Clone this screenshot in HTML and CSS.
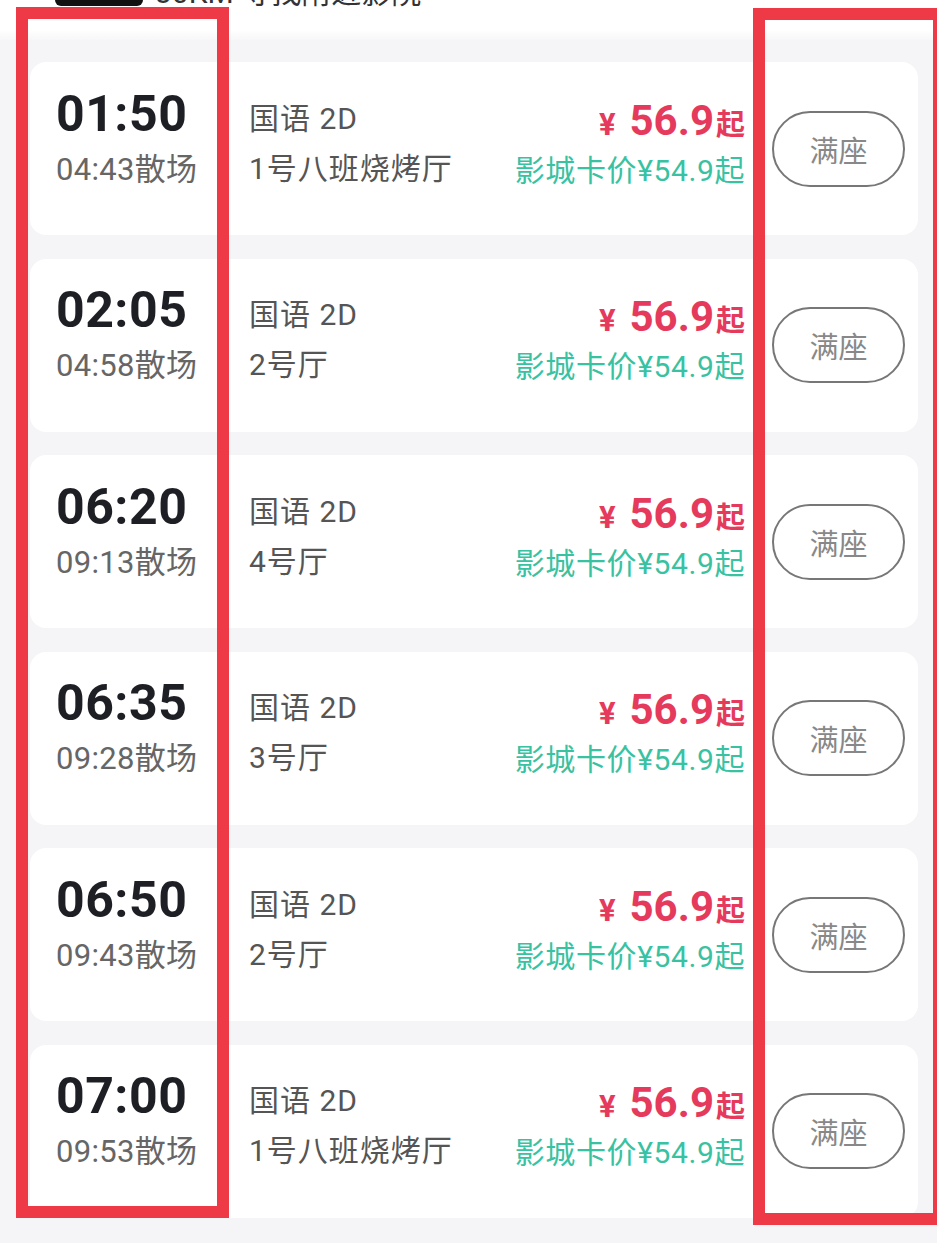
FILE: index.html
```html
<!DOCTYPE html>
<html lang="zh-CN">
<head>
  <meta charset="UTF-8" />
  <meta name="viewport" content="width=device-width, initial-scale=1.0" />
  <title>场次列表</title>
  <link rel="stylesheet" href="styles.css">
</head>
<body>

  <div class="topbar">
    <span class="tag"></span>
    <span class="top-text">30KM 寻找附近影院</span>
  </div>

  <div class="list">
    <div class="card">
      <div class="time">
        <div class="start">01:50</div>
        <div class="end">04:43散场</div>
      </div>
      <div class="info">
        <div class="lang">国语 2D</div>
        <div class="hall">1号八班烧烤厅</div>
      </div>
      <div class="price">
        <div class="now"><span class="yen">¥</span><span class="num">56.9</span><span class="qi">起</span></div>
        <div class="card-price">影城卡价¥54.9起</div>
      </div>
      <div class="btn">满座</div>
    </div>

    <div class="card">
      <div class="time">
        <div class="start">02:05</div>
        <div class="end">04:58散场</div>
      </div>
      <div class="info">
        <div class="lang">国语 2D</div>
        <div class="hall">2号厅</div>
      </div>
      <div class="price">
        <div class="now"><span class="yen">¥</span><span class="num">56.9</span><span class="qi">起</span></div>
        <div class="card-price">影城卡价¥54.9起</div>
      </div>
      <div class="btn">满座</div>
    </div>

    <div class="card">
      <div class="time">
        <div class="start">06:20</div>
        <div class="end">09:13散场</div>
      </div>
      <div class="info">
        <div class="lang">国语 2D</div>
        <div class="hall">4号厅</div>
      </div>
      <div class="price">
        <div class="now"><span class="yen">¥</span><span class="num">56.9</span><span class="qi">起</span></div>
        <div class="card-price">影城卡价¥54.9起</div>
      </div>
      <div class="btn">满座</div>
    </div>

    <div class="card">
      <div class="time">
        <div class="start">06:35</div>
        <div class="end">09:28散场</div>
      </div>
      <div class="info">
        <div class="lang">国语 2D</div>
        <div class="hall">3号厅</div>
      </div>
      <div class="price">
        <div class="now"><span class="yen">¥</span><span class="num">56.9</span><span class="qi">起</span></div>
        <div class="card-price">影城卡价¥54.9起</div>
      </div>
      <div class="btn">满座</div>
    </div>

    <div class="card">
      <div class="time">
        <div class="start">06:50</div>
        <div class="end">09:43散场</div>
      </div>
      <div class="info">
        <div class="lang">国语 2D</div>
        <div class="hall">2号厅</div>
      </div>
      <div class="price">
        <div class="now"><span class="yen">¥</span><span class="num">56.9</span><span class="qi">起</span></div>
        <div class="card-price">影城卡价¥54.9起</div>
      </div>
      <div class="btn">满座</div>
    </div>

    <div class="card">
      <div class="time">
        <div class="start">07:00</div>
        <div class="end">09:53散场</div>
      </div>
      <div class="info">
        <div class="lang">国语 2D</div>
        <div class="hall">1号八班烧烤厅</div>
      </div>
      <div class="price">
        <div class="now"><span class="yen">¥</span><span class="num">56.9</span><span class="qi">起</span></div>
        <div class="card-price">影城卡价¥54.9起</div>
      </div>
      <div class="btn">满座</div>
    </div>
  </div>

  <!-- red annotation boxes drawn over the screenshot -->
  <div class="mark mark-left"></div>
  <div class="mark mark-right"></div>

</body>
</html>
```

FILE: styles.css
```css
* {
  box-sizing: border-box;
  margin: 0;
  padding: 0;
}

body {
  background: #f5f5f7;
  font-family: Roboto, "Noto Sans CJK SC", sans-serif;
  position: relative;
  min-height: 1243px;
  overflow: hidden;
}

.topbar {
  height: 40px;
  background: linear-gradient(#fff 30px, #f7f7f9);
  display: flex;
  align-items: flex-start;
  gap: 12px;
  padding-left: 55px;
  overflow: hidden;
}

.tag {
  display: block;
  width: 88px;
  height: 30px;
  margin-top: -24px;
  border-radius: 6px;
  background: #111;
}

.top-text {
  margin-top: -32px;
  font-size: 30px;
  color: #333;
}

.list {
  display: flex;
  flex-direction: column;
  gap: 23.6px;
  padding: 22px 19px 0 30px;
}

.card {
  height: 173px;
  background: #fff;
  border-radius: 16px;
  display: flex;
  align-items: center;
  padding: 0 13px 0 26px;
}

.time {
  width: 193px;
  margin-bottom: 22px;
}

.start {
  font-size: 50px;
  font-weight: bold;
  color: #1e1f24;
  line-height: 56px;
  letter-spacing: 0.5px;
}

.end {
  font-size: 31px;
  color: #666;
  line-height: 40px;
  margin-top: 8px;
  letter-spacing: 0.3px;
}

.info {
  flex: 1;
  color: #555;
  font-size: 30px;
  line-height: 50px;
  letter-spacing: 1px;
  margin-bottom: 10px;
}

.price {
  text-align: right;
  margin-bottom: 16px;
}

.now {
  color: #e53a5c;
  font-weight: bold;
  line-height: 50px;
}

.yen {
  font-size: 31px;
  margin-right: 14px;
}

.num {
  font-size: 42px;
}

.qi {
  font-size: 29px;
  margin-left: 2px;
}

.card-price {
  color: #38c2a1;
  font-size: 30px;
  line-height: 31px;
  letter-spacing: 0.6px;
}

.btn {
  width: 133px;
  height: 76px;
  margin-left: 27px;
  border: 2px solid #777;
  border-radius: 38px;
  color: #888;
  font-size: 29px;
  display: flex;
  align-items: center;
  justify-content: center;
}

.mark {
  position: absolute;
  border: 12px solid #ee3a46;
}

.mark-left {
  left: 16px;
  top: 7px;
  width: 213px;
  height: 1211px;
}

.mark-right {
  left: 753px;
  top: 8px;
  width: 192px;
  height: 1217px;
}
```
